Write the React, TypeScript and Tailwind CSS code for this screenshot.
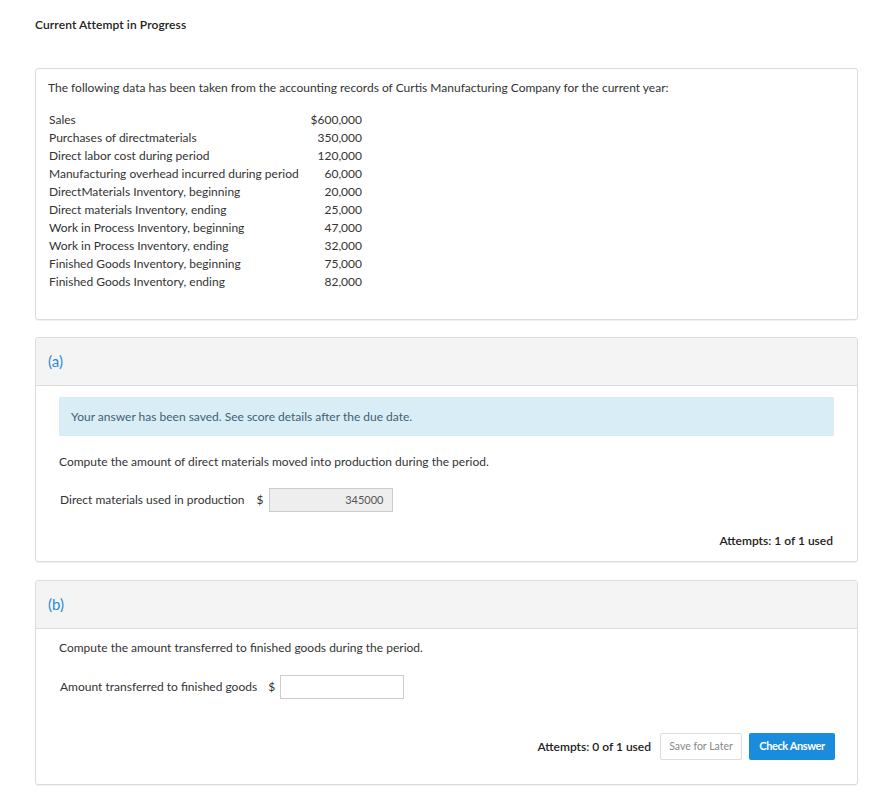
import React from "react";

const rows: [string, string][] = [
  ["Sales", "$600,000"],
  ["Purchases of directmaterials", "350,000"],
  ["Direct labor cost during period", "120,000"],
  ["Manufacturing overhead incurred during period", "60,000"],
  ["DirectMaterials Inventory, beginning", "20,000"],
  ["Direct materials Inventory, ending", "25,000"],
  ["Work in Process Inventory, beginning", "47,000"],
  ["Work in Process Inventory, ending", "32,000"],
  ["Finished Goods Inventory, beginning", "75,000"],
  ["Finished Goods Inventory, ending", "82,000"],
];

export default function App() {
  return (
    <div className="bg-white min-h-[800px] w-[890px] pl-[35px] pr-[32px] pt-[17px] font-['Lato','Noto_Sans',sans-serif] text-[#333]">
      <div className="text-[12px] font-semibold leading-[16px] tracking-[0.1px] text-[#222]">Current Attempt in Progress</div>

      <div className="mt-[35px] border border-[#dcdcdc] rounded-[3px] shadow-[0_1px_1px_rgba(0,0,0,0.06)] px-[12px] pt-[10px] pb-[28px]">
        <p className="text-[12px] leading-[18px]">
          The following data has been taken from the accounting records of Curtis Manufacturing Company for the current year:
        </p>
        <div className="mt-[14px] grid grid-cols-[262px_52px] text-[12px] leading-[18px]">
          {rows.map(([label, value]) => (
            <React.Fragment key={label}>
              <div className="pl-[1px] whitespace-nowrap">{label}</div>
              <div className="text-right">{value}</div>
            </React.Fragment>
          ))}
        </div>
      </div>

      <div className="mt-[17px] border border-[#dcdcdc] rounded-[3px] shadow-[0_1px_1px_rgba(0,0,0,0.06)] overflow-hidden">
        <div className="h-[48px] bg-[#f4f4f4] border-b border-[#dcdcdc] px-[12px] flex items-center text-[15px] text-[#2a8ccf]">
          (a)
        </div>
        <div className="px-[23px] pt-[11px] pb-[11px]">
          <div className="h-[39px] bg-[#d9edf7] flex items-center pl-[12px] text-[12px] text-[#3f5f73]">
            Your answer has been saved. See score details after the due date.
          </div>
          <p className="mt-[17px] text-[12px] leading-[18px]">
            Compute the amount of direct materials moved into production during the period.
          </p>
          <div className="mt-[17px] flex items-center pl-[1px] text-[12px]">
            <span>Direct materials used in production</span>
            <span className="ml-[12px]">$</span>
            <div className="ml-[6px] w-[124px] h-[24px] bg-[#eeeeee] border border-[#cccccc] flex items-center justify-end pr-[9px] text-[11px] text-[#555]">
              345000
            </div>
          </div>
          <div className="mt-[20px] flex justify-end pr-[1px] text-[12px] leading-[18px] font-semibold text-[#222]">
            Attempts: 1 of 1 used
          </div>
        </div>
      </div>

      <div className="mt-[18px] border border-[#dcdcdc] rounded-[3px] shadow-[0_1px_1px_rgba(0,0,0,0.06)] overflow-hidden">
        <div className="h-[48px] bg-[#f4f4f4] border-b border-[#dcdcdc] px-[12px] flex items-center text-[15px] text-[#2a8ccf]">
          (b)
        </div>
        <div className="px-[23px] pt-[10px] pb-[24px]">
          <p className="text-[12px] leading-[18px]">
            Compute the amount transferred to finished goods during the period.
          </p>
          <div className="mt-[18px] flex items-center pl-[1px] text-[12px]">
            <span>Amount transferred to finished goods</span>
            <span className="ml-[11px]">$</span>
            <div className="ml-[5px] w-[124px] h-[24px] bg-white border border-[#cccccc]" />
          </div>
          <div className="mt-[34px] flex items-center justify-end -mr-[1px]">
            <span className="text-[12px] font-semibold text-[#222]">Attempts: 0 of 1 used</span>
            <button className="ml-[9px] w-[82px] h-[27px] bg-white border border-[#dddddd] rounded-[2px] text-[10.5px] text-[#888]">
              Save for Later
            </button>
            <button className="ml-[7px] w-[86px] h-[27px] bg-[#1a8cdb] rounded-[2px] text-[11px] font-bold tracking-[-0.4px] text-white">
              Check Answer
            </button>
          </div>
        </div>
      </div>
    </div>
  );
}
